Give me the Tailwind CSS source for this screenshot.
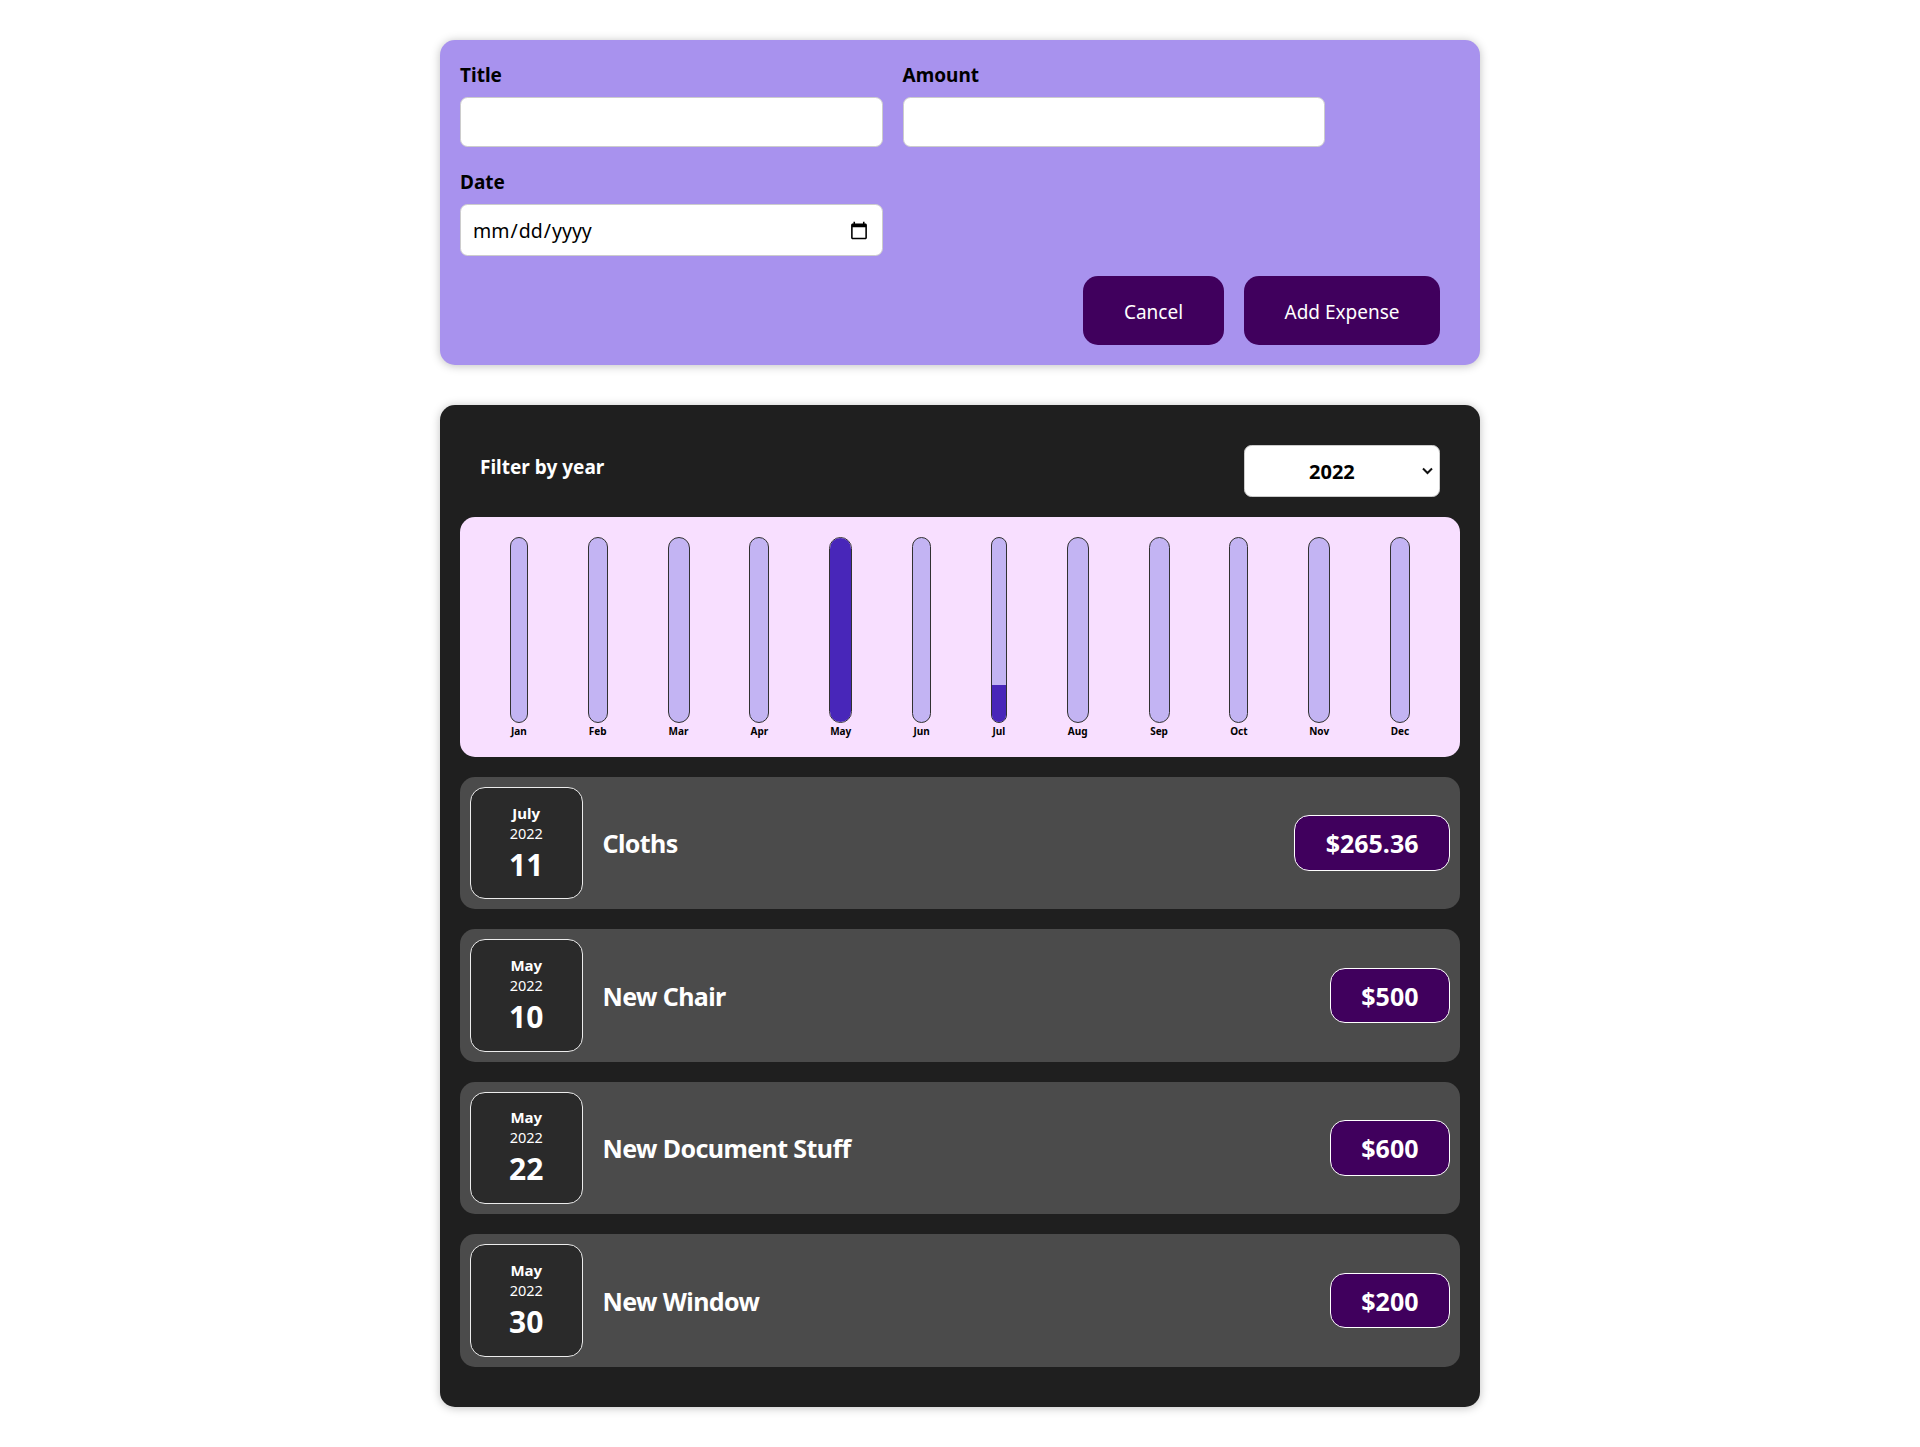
<!DOCTYPE html>
<html>
<head>
	<meta charset="utf-8">
	<script src="https://cdn.jsdelivr.net/npm/@tailwindcss/browser@4"></script>
	<title>Expenses</title>
</head>
<body class="bg-white font-['Noto_Sans',sans-serif]">
	<div class="w-[1040px] mx-auto pt-[40px] pb-[40px]">

		<form class="bg-[#a892ee] rounded-[15px] p-[20px] shadow-[0_1px_10px_rgba(0,0,0,0.25)]">
			<div class="flex flex-wrap gap-[20px] mb-[20px]">
				<div class="w-[422.5px]">
					<label class="block mb-[10px] h-[27px] text-[19px] leading-[30px] font-bold text-black">Title</label>
					<input type="text" class="block w-full h-[50px] px-[10px] bg-white border border-[#ccc] rounded-[7.5px]">
				</div>
				<div class="w-[422.5px]">
					<label class="block mb-[10px] h-[27px] text-[19px] leading-[30px] font-bold text-black">Amount</label>
					<input type="number" class="block w-full h-[50px] px-[10px] bg-white border border-[#ccc] rounded-[7.5px]">
				</div>
				<div class="w-[422.5px]">
					<label class="block mb-[10px] h-[27px] text-[19px] leading-[30px] font-bold text-black">Date</label>
					<input type="date" class="block w-full h-[52px] pl-[11px] pr-[11px] pt-[1px] bg-white border border-[#ccc] rounded-[7.5px] text-[19.5px] text-black">
				</div>
			</div>
			<div class="flex justify-end gap-[20px] pr-[20px]">
				<button type="button" class="w-[141px] h-[69px] pt-[4px] bg-[#40005d] text-white text-[19px] rounded-[15px]">Cancel</button>
				<button type="button" class="w-[196px] h-[69px] pt-[4px] bg-[#40005d] text-white text-[19px] rounded-[15px]">Add Expense</button>
			</div>
		</form>

		<div class="mt-[40px] bg-[#1f1f1f] rounded-[15px] p-[20px] shadow-[0_1px_10px_rgba(0,0,0,0.25)]">
			<div class="flex justify-between items-center px-[20px] my-[20px] text-white">
				<label class="mb-[8px] text-[19px] font-bold">Filter by year</label>
				<div class="relative w-[196px] h-[52px]">
					<select class="appearance-none w-full h-full pl-[64px] pt-[1px] bg-white text-black text-[20px] font-bold border border-[#ccc] rounded-[7.5px]">
						<option>2022</option>
						<option>2021</option>
						<option>2020</option>
						<option>2019</option>
					</select>
					<svg class="absolute right-[7px] top-[22px] pointer-events-none" width="11" height="8" viewBox="0 0 11 8" fill="none" stroke="#111" stroke-width="2"><path d="M1 1.5l4.5 4.5 4.5-4.5"/></svg>
				</div>
			</div>

			<div class="h-[240px] p-[20px] bg-[#f8dfff] rounded-[15px] flex justify-around text-center">
				<div class="h-full w-[18px] flex flex-col items-center">
					<div class="w-full flex-1 flex flex-col justify-end bg-[#c3b4f3] border border-[#313131] rounded-[15px] overflow-hidden"></div>
					<div class="h-[14px] leading-[16px] text-[10px] font-bold text-black">Jan</div>
				</div>
				<div class="h-full w-[20px] flex flex-col items-center">
					<div class="w-full flex-1 flex flex-col justify-end bg-[#c3b4f3] border border-[#313131] rounded-[15px] overflow-hidden"></div>
					<div class="h-[14px] leading-[16px] text-[10px] font-bold text-black">Feb</div>
				</div>
				<div class="h-full w-[22px] flex flex-col items-center">
					<div class="w-full flex-1 flex flex-col justify-end bg-[#c3b4f3] border border-[#313131] rounded-[15px] overflow-hidden"></div>
					<div class="h-[14px] leading-[16px] text-[10px] font-bold text-black">Mar</div>
				</div>
				<div class="h-full w-[20px] flex flex-col items-center">
					<div class="w-full flex-1 flex flex-col justify-end bg-[#c3b4f3] border border-[#313131] rounded-[15px] overflow-hidden"></div>
					<div class="h-[14px] leading-[16px] text-[10px] font-bold text-black">Apr</div>
				</div>
				<div class="h-full w-[23px] flex flex-col items-center">
					<div class="w-full flex-1 flex flex-col justify-end bg-[#c3b4f3] border border-[#313131] rounded-[15px] overflow-hidden">
						<div class="w-full h-full bg-[#4826b9]"></div>
					</div>
					<div class="h-[14px] leading-[16px] text-[10px] font-bold text-black">May</div>
				</div>
				<div class="h-full w-[19px] flex flex-col items-center">
					<div class="w-full flex-1 flex flex-col justify-end bg-[#c3b4f3] border border-[#313131] rounded-[15px] overflow-hidden"></div>
					<div class="h-[14px] leading-[16px] text-[10px] font-bold text-black">Jun</div>
				</div>
				<div class="h-full w-[16px] flex flex-col items-center">
					<div class="w-full flex-1 flex flex-col justify-end bg-[#c3b4f3] border border-[#313131] rounded-[15px] overflow-hidden">
						<div class="w-full h-[20%] bg-[#4826b9]"></div>
					</div>
					<div class="h-[14px] leading-[16px] text-[10px] font-bold text-black">Jul</div>
				</div>
				<div class="h-full w-[22px] flex flex-col items-center">
					<div class="w-full flex-1 flex flex-col justify-end bg-[#c3b4f3] border border-[#313131] rounded-[15px] overflow-hidden"></div>
					<div class="h-[14px] leading-[16px] text-[10px] font-bold text-black">Aug</div>
				</div>
				<div class="h-full w-[21px] flex flex-col items-center">
					<div class="w-full flex-1 flex flex-col justify-end bg-[#c3b4f3] border border-[#313131] rounded-[15px] overflow-hidden"></div>
					<div class="h-[14px] leading-[16px] text-[10px] font-bold text-black">Sep</div>
				</div>
				<div class="h-full w-[19px] flex flex-col items-center">
					<div class="w-full flex-1 flex flex-col justify-end bg-[#c3b4f3] border border-[#313131] rounded-[15px] overflow-hidden"></div>
					<div class="h-[14px] leading-[16px] text-[10px] font-bold text-black">Oct</div>
				</div>
				<div class="h-full w-[22px] flex flex-col items-center">
					<div class="w-full flex-1 flex flex-col justify-end bg-[#c3b4f3] border border-[#313131] rounded-[15px] overflow-hidden"></div>
					<div class="h-[14px] leading-[16px] text-[10px] font-bold text-black">Nov</div>
				</div>
				<div class="h-full w-[20px] flex flex-col items-center">
					<div class="w-full flex-1 flex flex-col justify-end bg-[#c3b4f3] border border-[#313131] rounded-[15px] overflow-hidden"></div>
					<div class="h-[14px] leading-[16px] text-[10px] font-bold text-black">Dec</div>
				</div>
			</div>

			<ul>
				<li class="mt-[20px] h-[132.4px] p-[10px] bg-[#4b4b4b] rounded-[15px] flex items-center justify-between">
					<div class="flex items-center gap-[20px]">
						<div class="w-[112.5px] h-[112.5px] flex flex-col items-center justify-center bg-[#2a2a2a] border border-[#ececec] rounded-[15px] text-white">
							<div class="pt-[1px] text-[15px] leading-[20px] font-bold">July</div>
							<div class="text-[14.5px] leading-[20px]">2022</div>
							<div class="mt-[2px] text-[30px] leading-[40px] font-bold">11</div>
						</div>
						<h2 class="pt-[2px] text-[25px] tracking-[-0.6px] font-bold text-white">Cloths</h2>
					</div>
					<div class="h-[55.5px] pt-[2px] px-[30.5px] flex items-center bg-[#40005d] border border-white rounded-[15px] text-[25px] font-bold text-white">$265.36</div>
				</li>
				<li class="mt-[20px] h-[132.4px] p-[10px] bg-[#4b4b4b] rounded-[15px] flex items-center justify-between">
					<div class="flex items-center gap-[20px]">
						<div class="w-[112.5px] h-[112.5px] flex flex-col items-center justify-center bg-[#2a2a2a] border border-[#ececec] rounded-[15px] text-white">
							<div class="pt-[1px] text-[15px] leading-[20px] font-bold">May</div>
							<div class="text-[14.5px] leading-[20px]">2022</div>
							<div class="mt-[2px] text-[30px] leading-[40px] font-bold">10</div>
						</div>
						<h2 class="pt-[2px] text-[25px] tracking-[-0.6px] font-bold text-white">New Chair</h2>
					</div>
					<div class="h-[55.5px] pt-[2px] px-[30.5px] flex items-center bg-[#40005d] border border-white rounded-[15px] text-[25px] font-bold text-white">$500</div>
				</li>
				<li class="mt-[20px] h-[132.4px] p-[10px] bg-[#4b4b4b] rounded-[15px] flex items-center justify-between">
					<div class="flex items-center gap-[20px]">
						<div class="w-[112.5px] h-[112.5px] flex flex-col items-center justify-center bg-[#2a2a2a] border border-[#ececec] rounded-[15px] text-white">
							<div class="pt-[1px] text-[15px] leading-[20px] font-bold">May</div>
							<div class="text-[14.5px] leading-[20px]">2022</div>
							<div class="mt-[2px] text-[30px] leading-[40px] font-bold">22</div>
						</div>
						<h2 class="pt-[2px] text-[25px] tracking-[-0.6px] font-bold text-white">New Document Stuff</h2>
					</div>
					<div class="h-[55.5px] pt-[2px] px-[30.5px] flex items-center bg-[#40005d] border border-white rounded-[15px] text-[25px] font-bold text-white">$600</div>
				</li>
				<li class="mt-[20px] h-[132.4px] p-[10px] bg-[#4b4b4b] rounded-[15px] flex items-center justify-between">
					<div class="flex items-center gap-[20px]">
						<div class="w-[112.5px] h-[112.5px] flex flex-col items-center justify-center bg-[#2a2a2a] border border-[#ececec] rounded-[15px] text-white">
							<div class="pt-[1px] text-[15px] leading-[20px] font-bold">May</div>
							<div class="text-[14.5px] leading-[20px]">2022</div>
							<div class="mt-[2px] text-[30px] leading-[40px] font-bold">30</div>
						</div>
						<h2 class="pt-[2px] text-[25px] tracking-[-0.6px] font-bold text-white">New Window</h2>
					</div>
					<div class="h-[55.5px] pt-[2px] px-[30.5px] flex items-center bg-[#40005d] border border-white rounded-[15px] text-[25px] font-bold text-white">$200</div>
				</li>
			</ul>
			<div class="h-[20px]"></div>
		</div>
	</div>
</body>
</html>
